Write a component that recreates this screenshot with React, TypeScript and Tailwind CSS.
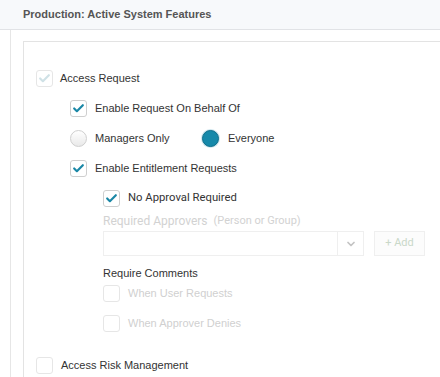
import { Check, ChevronDown } from "lucide-react";

function Box({ checked, disabled }: { checked?: boolean; disabled?: boolean }) {
  return (
    <span
      className={`w-[17px] h-[17px] rounded-[3px] border flex items-center justify-center flex-shrink-0 bg-white ${
        disabled ? "border-[#e6e6e6]" : "border-[#cfcfcf]"
      }`}
    >
      {checked && (
        <Check
          className={`w-[13px] h-[13px] ${disabled ? "text-[#cfe1e6]" : "text-[#1a87a6]"}`}
          strokeWidth={4}
        />
      )}
    </span>
  );
}

function Radio({ on }: { on?: boolean }) {
  return on ? (
    <span className="w-[17px] h-[17px] rounded-full bg-[#1689aa] border border-[#0e6f8b] shadow-[0_0_0_1px_#cfe6ee] flex-shrink-0" />
  ) : (
    <span className="w-[17px] h-[17px] rounded-full border border-[#cfcfcf] bg-gradient-to-b from-white to-[#e9e9e9] flex-shrink-0" />
  );
}

function Row({
  children,
  indent,
  className = "",
}: {
  children: React.ReactNode;
  indent: string;
  className?: string;
}) {
  return <div className={`h-[30px] flex items-center gap-2 ${indent} ${className}`}>{children}</div>;
}

export default function App() {
  const arial = "font-['Liberation_Sans',Arial,sans-serif]";
  const roboto = "font-['Roboto','Liberation_Sans',sans-serif]";

  return (
    <div className={`w-[440px] h-[377px] overflow-hidden bg-white ${arial}`}>
      <div className="h-[30px] bg-[#f7f9fb] border-b border-[#e1e3e6] flex items-center px-[23px]">
        <span className="text-[11px] font-bold text-[#555]">Production: Active System Features</span>
      </div>

      <div className="pl-[10px] h-full">
        <div className="border-l border-[#e6e6e6] pl-[12px] pt-[11px] h-full">
          <div className="border-l border-t border-[#e3e3e3] pt-[21px] pl-[12px] h-full text-[11px] text-[#333]">
            <Row indent="">
              <Box checked disabled />
              <span className="ml-[-1px]">Access Request</span>
            </Row>

            <Row indent="pl-[34px]">
              <Box checked />
              <span>Enable Request On Behalf Of</span>
            </Row>

            <Row indent="pl-[34px]">
              <Radio />
              <span className="w-[99px]">Managers Only</span>
              <Radio on />
              <span className="ml-[1px]">Everyone</span>
            </Row>

            <Row indent="pl-[34px]">
              <Box checked />
              <span>Enable Entitlement Requests</span>
            </Row>

            <Row indent="pl-[67px]">
              <Box checked />
              <span className={`${roboto} text-[11.3px] text-[#333]`}>No Approval Required</span>
            </Row>

            <div className="pl-[67px]">
              <div className={`${roboto} h-[16px] flex items-center text-[12px] text-[#d2d2d2]`}>
                Required Approvers
                <span className="ml-[6px] text-[11px]">(Person or Group)</span>
              </div>
              <div className="mt-[2px] flex gap-[10px]">
                <div className="w-[261px] h-[25px] border border-[#efefef] flex">
                  <div className="flex-1" />
                  <div className="w-[26px] border-l border-[#efefef] flex items-center justify-center">
                    <ChevronDown className="w-[12px] h-[12px] text-[#c4c4c4]" strokeWidth={3.5} />
                  </div>
                </div>
                <div
                  className={`${roboto} w-[51px] h-[25px] border border-[#efefef] bg-[#fcfcfc] flex items-center justify-center text-[11px] text-[#c9d8c9]`}
                >
                  + Add
                </div>
              </div>
              <div className="h-[14px] mt-[10px] flex items-center text-[#333]">Require Comments</div>
            </div>

            <Row indent="pl-[67px]" className="text-[#d0d0d0] -mt-[2px]">
              <Box disabled />
              <span>When User Requests</span>
            </Row>
            <Row indent="pl-[67px]" className="text-[#d0d0d0]">
              <Box disabled />
              <span>When Approver Denies</span>
            </Row>

            <Row indent="" className="mt-[12px]">
              <Box disabled />
              <span>Access Risk Management</span>
            </Row>
          </div>
        </div>
      </div>
    </div>
  );
}
